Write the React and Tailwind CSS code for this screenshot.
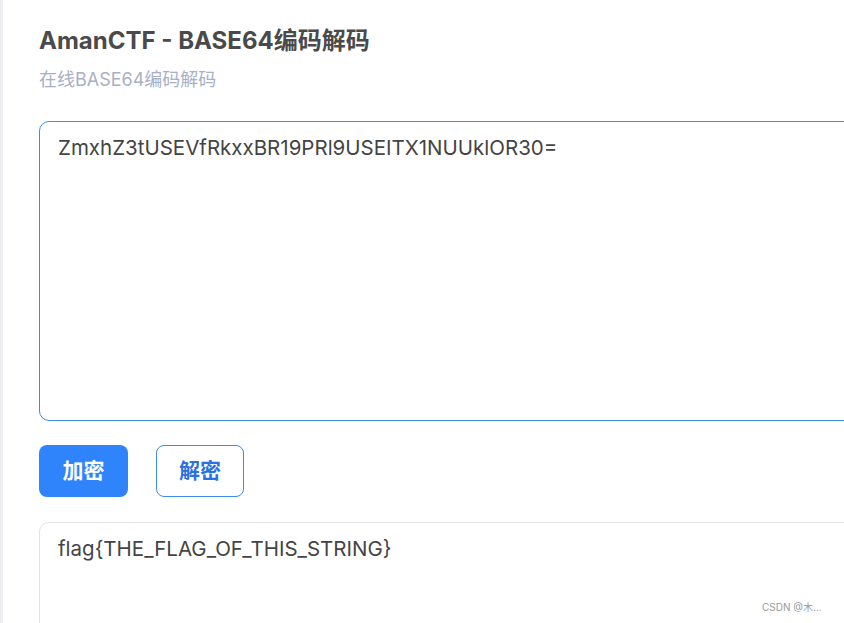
import { useState } from 'react'

export default function App() {
  const [input, setInput] = useState('ZmxhZ3tUSEVfRkxxBR19PRl9USEITX1NUUklOR30=')
  const [output, setOutput] = useState('flag{THE_FLAG_OF_THIS_STRING}')

  const encode = () => {
    try {
      setOutput(btoa(unescape(encodeURIComponent(input))))
    } catch (e) {
      setOutput('')
    }
  }

  const decode = () => {
    try {
      setOutput(decodeURIComponent(escape(atob(input))))
    } catch (e) {
      setOutput('')
    }
  }

  return (
    <div
      className="relative flex h-[623px] w-[844px] overflow-hidden bg-white"
      style={{ fontFamily: 'Inter, "Noto Sans CJK SC", sans-serif' }}
    >
      {/* left edge strip */}
      <div className="w-[3px] shrink-0 bg-[#eceef1]" />

      <main className="flex shrink-0 flex-col pl-[36px] pt-[26px]">
        {/* HEADER */}
        <h1 className="shrink-0 text-[24px] font-bold leading-[30px] text-[#4a4a4a]">
          AmanCTF - BASE64编码解码
        </h1>
        <p className="mt-[12px] shrink-0 text-[18px] leading-[24px] text-[#a9b0c5]">
          在线BASE64编码解码
        </p>

        {/* INPUT */}
        <textarea
          value={input}
          onChange={(e) => setInput(e.target.value)}
          spellCheck={false}
          className="mt-[29px] h-[300px] w-[860px] shrink-0 resize-none rounded-[10px] border border-[#3b8ced] px-[18px] pt-[12px] text-[20.5px] leading-[28px] text-[#444] outline-none"
        />

        {/* ACTIONS */}
        <div className="mt-[24px] flex shrink-0 gap-[28px]">
          <button
            onClick={encode}
            className="h-[52px] w-[89px] rounded-[8px] bg-[#2f84fc] text-[21px] font-bold text-white"
          >
            加密
          </button>
          <button
            onClick={decode}
            className="h-[52px] w-[88px] rounded-[8px] border border-[#3b8cf0] bg-white text-[21px] font-bold text-[#2a72e0]"
          >
            解密
          </button>
        </div>

        {/* OUTPUT */}
        <textarea
          value={output}
          readOnly
          spellCheck={false}
          className="mt-[25px] h-[200px] w-[860px] shrink-0 resize-none rounded-[10px] border border-[#e3e3e3] px-[18px] pt-[12px] text-[20.5px] leading-[28px] text-[#444] outline-none"
        />
      </main>

      <span className="absolute left-[762px] top-[600px] text-[10px] text-[#9a9a9a]">
        CSDN @木…
      </span>
    </div>
  )
}
